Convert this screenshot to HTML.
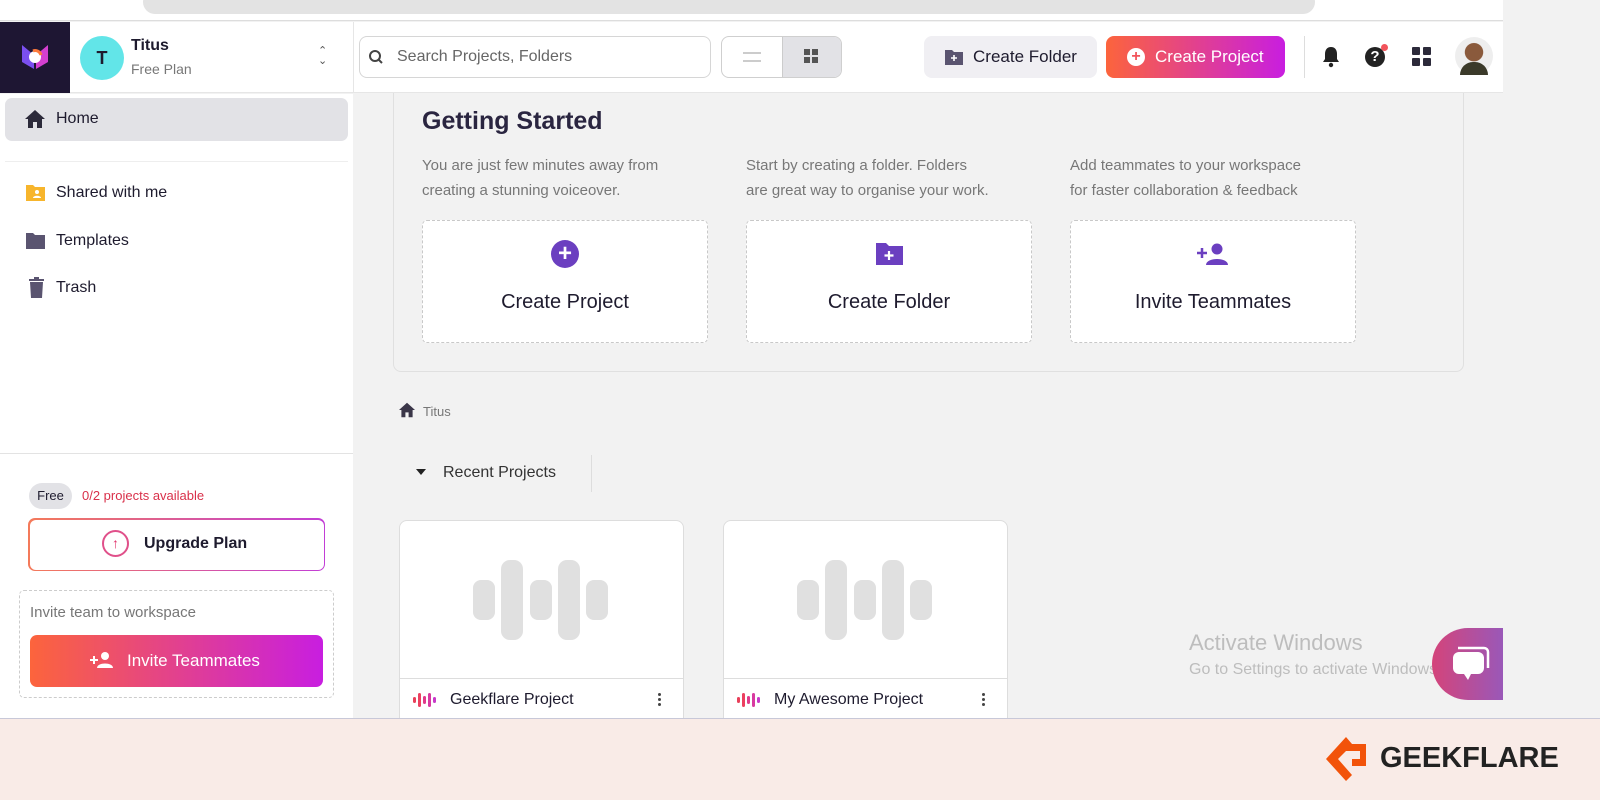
<!DOCTYPE html>
<html><head><meta charset="utf-8"><style>
*{box-sizing:border-box;margin:0;padding:0}
body{width:1600px;height:800px;overflow:hidden;background:#f2f2f2;font-family:"Liberation Sans",sans-serif;position:relative;color:#1e1b2e}
.a{position:absolute}
.btn-g{background:linear-gradient(90deg,#fc643c,#c81ee0);color:#fff}
</style></head><body>
<!-- getting started (behind header) -->
<div class="a" style="left:393px;top:50px;width:1071px;height:322px;border:1px solid #e0e0e0;border-radius:8px;background:#f2f2f2"></div>
<!-- browser chrome -->
<div class="a" style="left:0;top:0;width:1503px;height:21px;background:#fff;border-bottom:1px solid #ddd"></div>
<div class="a" style="left:143px;top:-10px;width:1172px;height:24px;background:#e3e3e3;border-radius:12px"></div>
<div class="a" style="left:1503px;top:0;width:97px;height:718px;background:#f2f2f2"></div>
<!-- header -->
<div class="a" style="left:0;top:22px;width:1503px;height:71px;background:#fff;border-bottom:1px solid #e6e6e6"></div>
<div class="a" style="left:0;top:22px;width:70px;height:71px;background:#1e1633"></div>
<svg class="a" style="left:20px;top:42px" width="30" height="30" viewBox="0 0 30 30"><path d="M2 3 L14 13 L14 27 L2 20Z" fill="#7b4ff0"/><path d="M28 3 L16 13 L16 27 L28 20Z" fill="#d43fd0"/><circle cx="15" cy="15" r="6" fill="#fff"/><path d="M13 9a6 6 0 0 1 8 4" stroke="#fc7a3c" stroke-width="3" fill="none"/></svg>
<div class="a" style="left:80px;top:36px;width:44px;height:44px;border-radius:50%;background:#62e5e8;font-size:18px;font-weight:bold;text-align:center;line-height:44px">T</div>
<div class="a" style="left:131px;top:37px;font-size:16px;font-weight:bold">Titus</div>
<div class="a" style="left:131px;top:61px;font-size:14px;color:#777">Free Plan</div>
<div class="a" style="left:318px;top:46px;font-size:11px;color:#555;line-height:10px">⌃<br>⌄</div>
<div class="a" style="left:353px;top:22px;width:1px;height:71px;background:#e6e6e6"></div>
<div class="a" style="left:359px;top:36px;width:352px;height:42px;border:1px solid #d6d6d6;border-radius:8px"></div>
<svg class="a" style="left:368px;top:49px" width="16" height="16" viewBox="0 0 16 16"><circle cx="7" cy="7" r="5" stroke="#444" stroke-width="2" fill="none"/><path d="M11 11l3 3" stroke="#444" stroke-width="2"/></svg>
<div class="a" style="left:397px;top:48px;font-size:16px;color:#666">Search Projects, Folders</div>
<div class="a" style="left:721px;top:36px;width:121px;height:42px;border:1px solid #cfcfcf;border-radius:8px;overflow:hidden"><div class="a" style="left:60px;top:0;width:61px;height:42px;background:#e2e2e6;border-left:1px solid #ccc"></div></div>
<div class="a" style="left:743px;top:52px;width:18px;height:10px;border-top:2px solid #ccc;border-bottom:2px solid #ccc"></div>
<div class="a" style="left:804px;top:49px;width:6px;height:6px;background:#555;box-shadow:8px 0 #555,0 8px #555,8px 8px #555"></div>
<div class="a" style="left:924px;top:36px;width:173px;height:42px;background:#f0eff3;border-radius:8px"></div>
<svg class="a" style="left:944px;top:48px" width="20" height="18" viewBox="0 0 20 18"><path d="M1 2h7l2 2h9v13H1z" fill="#5a5470"/><path d="M10 7v6M7 10h6" stroke="#fff" stroke-width="1.6"/></svg>
<div class="a" style="left:973px;top:47px;font-size:17px">Create Folder</div>
<div class="a btn-g" style="left:1106px;top:36px;width:179px;height:42px;border-radius:8px"></div>
<div class="a" style="left:1127px;top:48px;width:18px;height:18px;border-radius:50%;background:#fff;color:#f2545b;font-size:16px;line-height:18px;text-align:center;font-weight:bold">+</div>
<div class="a" style="left:1155px;top:47px;font-size:17px;color:#fff">Create Project</div>
<div class="a" style="left:1304px;top:36px;width:1px;height:42px;background:#ddd"></div>
<svg class="a" style="left:1322px;top:46px" width="18" height="22" viewBox="0 0 18 22"><path d="M9 1c-4 0-6 3-6 7v5l-2 3h16l-2-3V8c0-4-2-7-6-7z" fill="#222"/><circle cx="9" cy="19" r="2.2" fill="#222"/></svg>
<div class="a" style="left:1365px;top:47px;width:20px;height:20px;border-radius:50%;background:#222;color:#fff;font-weight:bold;font-size:15px;text-align:center;line-height:20px">?</div>
<div class="a" style="left:1381px;top:44px;width:7px;height:7px;border-radius:50%;background:#f2545b"></div>
<div class="a" style="left:1412px;top:47px;width:8px;height:8px;background:#2c2a3a;border-radius:1px;box-shadow:11px 0 #2c2a3a,0 11px #2c2a3a,11px 11px #2c2a3a"></div>
<div class="a" style="left:1455px;top:37px;width:38px;height:38px;border-radius:50%;background:radial-gradient(circle at 50% 40%,#8a5a3c 30%,#eee 32%)"></div>
<div class="a" style="left:1460px;top:62px;width:28px;height:13px;border-radius:14px 14px 0 0;background:#3b3a2a"></div>
<!-- sidebar -->
<div class="a" style="left:0;top:94px;width:353px;height:624px;background:#fff"></div>
<div class="a" style="left:5px;top:98px;width:343px;height:43px;background:#e2e2e6;border-radius:7px"></div>
<svg class="a" style="left:24px;top:109px" width="22" height="20" viewBox="0 0 22 20"><path d="M11 1L1 10h3v9h5v-6h4v6h5v-9h3z" fill="#2c2a3a"/></svg>
<div class="a" style="left:56px;top:110px;font-size:16px">Home</div>
<div class="a" style="left:5px;top:161px;width:343px;height:1px;background:#eee"></div>
<svg class="a" style="left:25px;top:184px" width="21" height="18" viewBox="0 0 21 18"><path d="M1 1h7l2 2h10v14H1z" fill="#f7b52c"/><circle cx="12" cy="8" r="2" fill="#fff"/><path d="M8 14c0-3 8-3 8 0z" fill="#fff"/></svg>
<div class="a" style="left:56px;top:184px;font-size:16px">Shared with me</div>
<svg class="a" style="left:25px;top:232px" width="21" height="18" viewBox="0 0 21 18"><path d="M1 1h7l2 2h10v14H1z" fill="#5a5470"/></svg>
<div class="a" style="left:56px;top:232px;font-size:16px">Templates</div>
<svg class="a" style="left:28px;top:277px" width="17" height="21" viewBox="0 0 17 21"><path d="M1 2h15v2H1zM6 0h5v2H6zM2 5h13l-1 16H3z" fill="#5a5470"/></svg>
<div class="a" style="left:56px;top:279px;font-size:16px">Trash</div>
<div class="a" style="left:0;top:453px;width:353px;height:1px;background:#e3e3e3"></div>
<div class="a" style="left:29px;top:483px;width:43px;height:26px;border-radius:13px;background:#e2e2e6;font-size:13px;text-align:center;line-height:26px">Free</div>
<div class="a" style="left:82px;top:488px;font-size:13px;color:#d9304a">0/2 projects available</div>
<div class="a" style="left:28px;top:518px;width:297px;height:53px;border-radius:7px;background:linear-gradient(90deg,#f47a5a,#c23ed6);padding:1.5px"><div style="width:100%;height:100%;background:#fff;border-radius:6px"></div></div>
<div class="a" style="left:102px;top:530px;width:27px;height:27px;border-radius:50%;border:2px solid #e0508a;color:#e0306a;text-align:center;font-size:14px;line-height:23px;font-weight:bold">↑</div>
<div class="a" style="left:144px;top:535px;font-size:16px;font-weight:bold">Upgrade Plan</div>
<div class="a" style="left:19px;top:590px;width:315px;height:108px;border:1px dashed #ccc;border-radius:5px"></div>
<div class="a" style="left:30px;top:604px;font-size:15px;color:#777">Invite team to workspace</div>
<div class="a btn-g" style="left:30px;top:635px;width:293px;height:52px;border-radius:7px"></div>
<svg class="a" style="left:90px;top:651px" width="24" height="18" viewBox="0 0 24 18"><circle cx="15" cy="5" r="4" fill="#fff"/><path d="M7 17c0-6 16-6 16 0z" fill="#fff"/><path d="M4 5v8M0 9h8" stroke="#fff" stroke-width="2"/></svg>
<div class="a" style="left:127px;top:651px;font-size:17px;color:#fff">Invite Teammates</div>
<!-- getting started content -->
<div class="a" style="left:422px;top:107px;font-size:25px;font-weight:bold;color:#2a2540">Getting Started</div>
<div class="a" style="left:422px;top:153px;font-size:15px;color:#777;line-height:25px">You are just few minutes away from<br>creating a stunning voiceover.</div>
<div class="a" style="left:746px;top:153px;font-size:15px;color:#777;line-height:25px">Start by creating a folder. Folders<br>are great way to organise your work.</div>
<div class="a" style="left:1070px;top:153px;font-size:15px;color:#777;line-height:25px">Add teammates to your workspace<br>for faster collaboration &amp; feedback</div>
<div class="a" style="left:422px;top:220px;width:286px;height:123px;background:#fff;border:1px dashed #c8c8c8;border-radius:5px"></div>
<div class="a" style="left:746px;top:220px;width:286px;height:123px;background:#fff;border:1px dashed #c8c8c8;border-radius:5px"></div>
<div class="a" style="left:1070px;top:220px;width:286px;height:123px;background:#fff;border:1px dashed #c8c8c8;border-radius:5px"></div>
<div class="a" style="left:551px;top:240px;width:28px;height:28px;border-radius:50%;background:#6b3fc0;color:#fff;font-size:24px;font-weight:bold;text-align:center;line-height:28px">+</div>
<svg class="a" style="left:875px;top:241px" width="29" height="25" viewBox="0 0 29 25"><path d="M1 2h10l3 3h14v19H1z" fill="#6b3fc0"/><path d="M14 10v9M9.5 14.5h9" stroke="#fff" stroke-width="2.2"/></svg>
<svg class="a" style="left:1197px;top:242px" width="32" height="24" viewBox="0 0 32 24"><circle cx="20" cy="7" r="5.5" fill="#6b3fc0"/><path d="M9 23c0-8 22-8 22 0z" fill="#6b3fc0"/><path d="M5 6v10M0 11h10" stroke="#6b3fc0" stroke-width="2.5"/></svg>
<div class="a" style="left:422px;top:291px;width:286px;text-align:center;font-size:20px">Create Project</div>
<div class="a" style="left:746px;top:291px;width:286px;text-align:center;font-size:20px">Create Folder</div>
<div class="a" style="left:1070px;top:291px;width:286px;text-align:center;font-size:20px">Invite Teammates</div>
<!-- breadcrumb -->
<svg class="a" style="left:398px;top:402px" width="18" height="16" viewBox="0 0 22 20"><path d="M11 1L1 10h3v9h5v-6h4v6h5v-9h3z" fill="#3a3648"/></svg>
<div class="a" style="left:423px;top:404px;font-size:13px;color:#777">Titus</div>
<div class="a" style="left:416px;top:469px;width:0;height:0;border-left:5px solid transparent;border-right:5px solid transparent;border-top:6px solid #222"></div>
<div class="a" style="left:443px;top:464px;font-size:16px;color:#333">Recent Projects</div>
<div class="a" style="left:591px;top:455px;width:1px;height:37px;background:#ddd"></div>
<!-- project cards -->
<div class="a" style="left:399px;top:520px;width:285px;height:210px;background:#fff;border:1px solid #ddd;border-radius:8px"></div>
<div class="a" style="left:723px;top:520px;width:285px;height:210px;background:#fff;border:1px solid #ddd;border-radius:8px"></div>
<div class="a" style="left:399px;top:678px;width:285px;height:1px;background:#ddd"></div>
<div class="a" style="left:723px;top:678px;width:285px;height:1px;background:#ddd"></div>
<svg class="a" style="left:473px;top:560px" width="136" height="80"><g fill="#e0e0e0"><rect x="0" y="20" width="22" height="40" rx="8"/><rect x="28" y="0" width="22" height="80" rx="9"/><rect x="57" y="20" width="22" height="40" rx="8"/><rect x="85" y="0" width="22" height="80" rx="9"/><rect x="113" y="20" width="22" height="40" rx="8"/></g></svg>
<svg class="a" style="left:797px;top:560px" width="136" height="80"><g fill="#e0e0e0"><rect x="0" y="20" width="22" height="40" rx="8"/><rect x="28" y="0" width="22" height="80" rx="9"/><rect x="57" y="20" width="22" height="40" rx="8"/><rect x="85" y="0" width="22" height="80" rx="9"/><rect x="113" y="20" width="22" height="40" rx="8"/></g></svg>
<svg class="a" style="left:413px;top:692px" width="25" height="16"><g fill="#e8405a"><rect x="0" y="5" width="3" height="6" rx="1.5"/><rect x="5" y="1" width="3" height="14" rx="1.5" fill="#ec4060"/><rect x="10" y="4" width="3" height="8" rx="1.5" fill="#e03a8a"/><rect x="15" y="1" width="3" height="14" rx="1.5" fill="#d83aa0"/><rect x="20" y="5" width="3" height="6" rx="1.5" fill="#c83ac8"/></g></svg>
<svg class="a" style="left:737px;top:692px" width="25" height="16"><g fill="#e8405a"><rect x="0" y="5" width="3" height="6" rx="1.5"/><rect x="5" y="1" width="3" height="14" rx="1.5" fill="#ec4060"/><rect x="10" y="4" width="3" height="8" rx="1.5" fill="#e03a8a"/><rect x="15" y="1" width="3" height="14" rx="1.5" fill="#d83aa0"/><rect x="20" y="5" width="3" height="6" rx="1.5" fill="#c83ac8"/></g></svg>
<div class="a" style="left:450px;top:691px;font-size:16px">Geekflare Project</div>
<div class="a" style="left:774px;top:691px;font-size:16px">My Awesome Project</div>
<div class="a" style="left:658px;top:693px;width:3px;height:3px;border-radius:50%;background:#444;box-shadow:0 5px #444,0 10px #444"></div>
<div class="a" style="left:982px;top:693px;width:3px;height:3px;border-radius:50%;background:#444;box-shadow:0 5px #444,0 10px #444"></div>
<!-- watermark -->
<div class="a" style="left:1189px;top:630px;font-size:22px;color:#bdbdbd">Activate Windows</div>
<div class="a" style="left:1189px;top:661px;font-size:16px;color:#bdbdbd">Go to Settings to activate Windows</div>
<div class="a" style="left:1432px;top:628px;width:71px;height:72px;border-radius:36px 0 0 36px;background:linear-gradient(90deg,#d4447a,#9a58b8)"></div>
<svg class="a" style="left:1452px;top:645px" width="38" height="38" viewBox="0 0 38 38"><path d="M6 3h26a4 4 0 0 1 4 4v16" stroke="#fff" stroke-width="2.5" fill="none"/><rect x="1" y="7" width="31" height="22" rx="6" fill="#fff"/><path d="M12 29l4 6 3-6z" fill="#fff"/></svg>
<!-- footer -->
<div class="a" style="left:0;top:718px;width:1600px;height:82px;background:#f9ebe7;border-top:1px solid #c8c8d8"></div>
<svg class="a" style="left:1322px;top:735px" width="50" height="48" viewBox="0 0 50 48"><path d="M24 2 L4 24 L24 46 L30 40 L16 24 L24 16 L38 16 L38 24 L30 24 L30 31 L44 31 L44 9 L30 9 Z" fill="#f2530a"/></svg>
<div class="a" style="left:1380px;top:742px;font-size:29px;font-weight:bold;color:#222;letter-spacing:0">GEEKFLARE</div>
</body></html>
